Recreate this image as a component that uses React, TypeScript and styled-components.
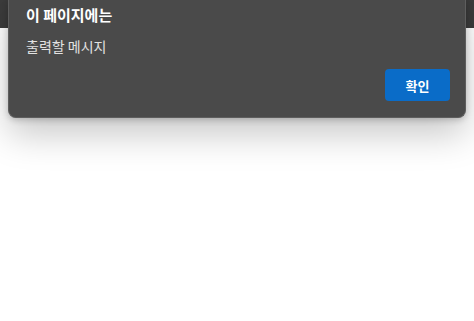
import styled, { createGlobalStyle } from "styled-components";

const Global = createGlobalStyle`
  html, body {
    margin: 0;
    padding: 0;
    background: #ffffff;
    font-family: "Noto Sans CJK KR", "Noto Sans", sans-serif;
  }
`;

const Page = styled.div`
  position: relative;
  width: 474px;
  height: 321px;
  overflow: hidden;
  background: #ffffff;
`;

const TopBar = styled.div`
  height: 28px;
  background: #3b3b3b;
`;

const Dialog = styled.div`
  position: absolute;
  top: 0;
  left: 8px;
  width: 458px;
  height: 118px;
  box-sizing: border-box;
  background: #4a4a4a;
  border: 1px solid #5e5e5e;
  border-top: none;
  border-radius: 0 0 8px 8px;
  box-shadow: 0 16px 36px rgba(0, 0, 0, 0.22), 0 2px 6px rgba(0, 0, 0, 0.2);
  padding: 2px 15px 0 17px;
  display: flex;
  flex-direction: column;
`;

const Title = styled.div`
  color: #ffffff;
  font-size: 15px;
  font-weight: 700;
  line-height: 26px;
`;

const Message = styled.div`
  margin-top: 7px;
  color: #e2e2e2;
  font-size: 14px;
  line-height: 22px;
`;

const Actions = styled.div`
  display: flex;
  justify-content: flex-end;
  margin-top: 12px;
`;

const OkButton = styled.button`
  width: 65px;
  height: 32px;
  border: none;
  border-radius: 4px;
  background: #0a6cc8;
  color: #ffffff;
  font-family: inherit;
  font-size: 13px;
  font-weight: 700;
  cursor: pointer;
`;

export default function App() {
  return (
    <Page>
      <Global />
      <TopBar />
      <Dialog>
        <Title>이 페이지에는</Title>
        <Message>출력할 메시지</Message>
        <Actions>
          <OkButton>확인</OkButton>
        </Actions>
      </Dialog>
    </Page>
  );
}
